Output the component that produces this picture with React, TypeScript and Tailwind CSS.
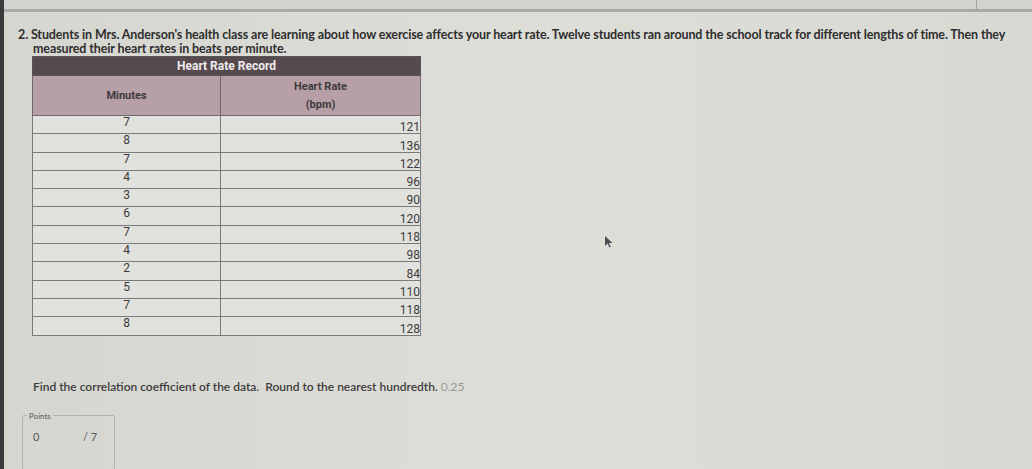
const rows: [number, number][] = [
  [7, 121],
  [8, 136],
  [7, 122],
  [4, 96],
  [3, 90],
  [6, 120],
  [7, 118],
  [4, 98],
  [2, 84],
  [5, 110],
  [7, 118],
  [8, 128],
];

export default function App() {
  return (
    <div className="w-[1032px] h-[469px] overflow-hidden flex bg-[#3a3a3a] font-['Lato',sans-serif]">
      <div className="w-[4px] shrink-0" />
      <div className="flex-1 flex flex-col bg-gradient-to-r from-[#d6d6d1] via-[#deded9] to-[#d9d9d4]">
        {/* top toolbar strip */}
        <div className="h-[12px] shrink-0 flex justify-end bg-[#d2d2ce] border-b-[3px] border-[#a9a9a8]">
          <div className="w-[56px] border-l border-[#a5a5a3]" />
        </div>

        <div className="flex-1 flex flex-col pl-[14px] pt-[16px]">
          <p className="text-[12.5px] leading-[14px] font-bold text-[#2e2e2e] tracking-[-0.12px] w-[1012px] pl-[15px] -indent-[15px]">
            2. Students in Mrs. Anderson's health class are learning about how exercise affects your heart rate. Twelve students ran around the school track for different lengths of time. Then they measured their heart rates in beats per minute.
          </p>

          <table className="ml-[14px] mt-[0px] w-[389px] border-collapse text-[11px] leading-none text-[#3c3c3c] font-['Roboto',sans-serif]">
            <thead>
              <tr>
                <th colSpan={2} className="h-[19px] bg-[#564a4f] text-[#f0eaec] font-bold text-[12px] border border-[#555]">
                  Heart Rate Record
                </th>
              </tr>
              <tr className="bg-[#b69fa7] text-[#3e3a3c] font-bold">
                <th className="w-[188px] h-[40px] border border-[#6e6a6b]">Minutes</th>
                <th className="border border-[#6e6a6b] leading-[18px]">
                  Heart Rate
                  <br />
                  (bpm)
                </th>
              </tr>
            </thead>
            <tbody className="bg-[#e1e1dd]">
              {rows.map(([m, hr], i) => (
                <tr key={i} className="h-[18.3px]">
                  <td className="border border-[#7a7a7a] text-center text-[12px] leading-[12px] align-top">{m}</td>
                  <td className="border border-[#7a7a7a] text-right text-[12px] leading-[12px] align-bottom">{hr}</td>
                </tr>
              ))}
            </tbody>
          </table>

          <p className="ml-[15px] mt-[44px] text-[12px] leading-[14px] font-semibold text-[#3c3c3c]">
            Find the correlation coefficient of the data.&nbsp; Round to the nearest hundredth.&nbsp;
            <span className="font-normal text-[#9a9a98]">0.25</span>
          </p>

          <fieldset className="mt-[16px] ml-[4px] w-[93px] h-[60px] border border-[#b3b3b0] rounded-[2px] px-[10px] pt-0">
            <legend className="text-[8px] px-[2px] text-[#555] ml-[-6px]">Points</legend>
            <div className="flex items-center mt-[7px] text-[11px] text-[#555]">
              <span className="w-[50px]">0</span>
              <span>/ 7</span>
            </div>
          </fieldset>
        </div>
        <div className="h-[6px] shrink-0 bg-[#a7a9ae]" />
      </div>
      {/* mouse pointer */}
      <svg className="absolute left-[605px] top-[236px]" width="8" height="12" viewBox="0 0 8 12">
        <path d="M0 0 L0 10 L2.5 7.5 L4.5 11.5 L5.8 10.8 L3.8 7 L7.5 7 Z" fill="#4a4f55" />
      </svg>
    </div>
  );
}
